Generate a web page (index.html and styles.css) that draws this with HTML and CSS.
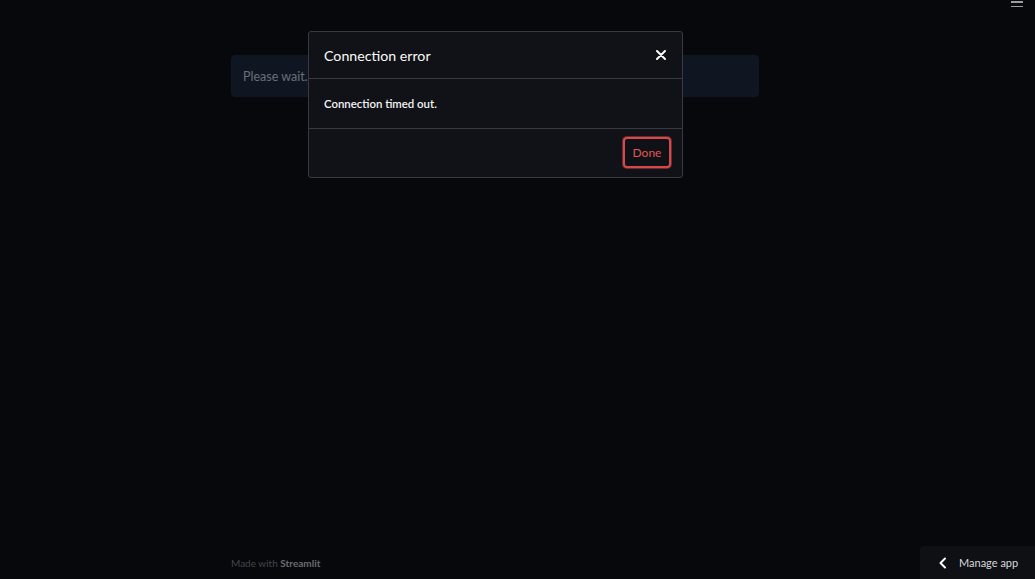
FILE: index.html
```html
<!DOCTYPE html>
<html>
<head>
<meta charset="utf-8">
<link rel="stylesheet" href="styles.css">
</head>
<body>
<div class="app">
  <div class="topbar">
    <span class="menu"><span></span><span></span></span>
  </div>
  <main class="main">
    <div class="info">Please wait...</div>
  </main>
  <footer class="footer">
    <span class="made">Made with <b>Streamlit</b></span>
  </footer>
</div>
<div class="manage">
  <svg class="chev" width="10" height="12" viewBox="0 0 10 12"><path d="M7 1.5 L2.5 6 L7 10.5" fill="none" stroke="#fafafa" stroke-width="2" stroke-linecap="round" stroke-linejoin="round"/></svg>
  <span>Manage app</span>
</div>
<div class="dialog">
  <div class="dlg-head">
    <span class="title">Connection error</span>
    <svg class="close" width="10" height="10" viewBox="0 0 10 10"><path d="M1 1 L9 9 M9 1 L1 9" stroke="#fafafa" stroke-width="2" stroke-linecap="round"/></svg>
  </div>
  <div class="dlg-body">Connection timed out.</div>
  <div class="dlg-foot">
    <button class="done">Done</button>
  </div>
</div>
</body>
</html>
```
FILE: styles.css
```css
html, body {
  margin: 0;
  padding: 0;
  height: 100%;
  background: #07080c;
  font-family: "Source Sans Pro", Lato, "Noto Sans", sans-serif;
  color: #fafafa;
  overflow: hidden;
}
.app {
  height: 579px;
  display: flex;
  flex-direction: column;
}
.topbar {
  height: 20px;
  display: flex;
  justify-content: flex-end;
  padding-right: 12px;
}
.menu {
  display: flex;
  flex-direction: column;
  gap: 3px;
  margin-top: 1px;
}
.menu span {
  display: block;
  width: 12px;
  height: 1.5px;
  background: #9a9ca3;
}
.main {
  flex: 1;
  padding: 35px 276px 0 231px;
}
.info {
  height: 42px;
  background: #0f1621;
  border-radius: 4px;
  display: flex;
  align-items: center;
  padding-left: 12px;
  font-size: 12.5px;
  color: #6b7079;
}
.footer {
  height: 33px;
  padding-left: 231px;
  display: flex;
  align-items: center;
}
.made {
  font-size: 10px;
  color: #44464c;
}
.made b {
  font-weight: 700;
  color: #6a6c72;
}
.manage {
  position: absolute;
  right: 0;
  bottom: 0;
  width: 115px;
  height: 33px;
  background: #0e1014;
  border-top-left-radius: 4px;
  display: flex;
  align-items: center;
  gap: 11px;
  padding-left: 18px;
  box-sizing: border-box;
  font-size: 11px;
  color: #d8d9dc;
}
.dialog {
  position: absolute;
  left: 308px;
  top: 31px;
  width: 375px;
  height: 147px;
  box-sizing: border-box;
  background: #111217;
  border: 1px solid #393a40;
  border-radius: 3px;
  display: flex;
  flex-direction: column;
}
.dlg-head {
  height: 46px;
  border-bottom: 1px solid #393a40;
  display: flex;
  align-items: center;
  justify-content: space-between;
  padding: 0 16px 0 15px;
}
.title {
  font-size: 14.2px;
  color: #fafafa;
}
.dlg-body {
  height: 49px;
  border-bottom: 1px solid #393a40;
  display: flex;
  align-items: center;
  padding-left: 15px;
  font-size: 11.4px;
  font-weight: 600;
  color: #f4f4f5;
}
.dlg-foot {
  flex: 1;
  display: flex;
  justify-content: flex-end;
  align-items: center;
  padding-right: 11px;
}
.done {
  width: 48px;
  height: 31px;
  background: #0f1117;
  border: 2px solid #d24a4a;
  box-shadow: 0 0 0 1px #6b2a2d;
  border-radius: 4px;
  color: #e05555;
  font-family: inherit;
  font-size: 12px;
  padding: 0;
  margin-bottom: 2px;
}
```
